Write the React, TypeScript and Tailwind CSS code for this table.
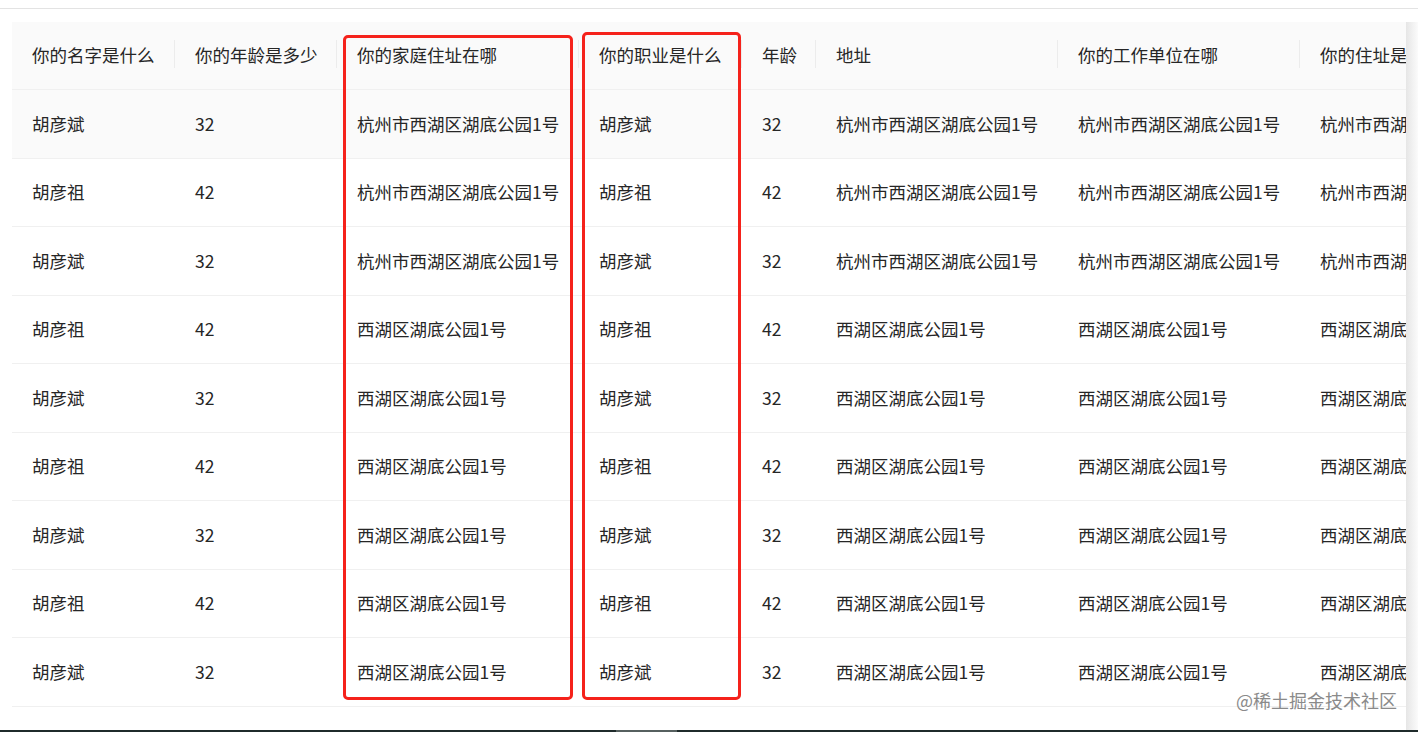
import React from "react";

const cols = "grid grid-cols-[163px_162px_242px_163px_74px_242px_242px_242px]";

const headers = [
  "你的名字是什么",
  "你的年龄是多少",
  "你的家庭住址在哪",
  "你的职业是什么",
  "年龄",
  "地址",
  "你的工作单位在哪",
  "你的住址是什么",
];

const long = "杭州市西湖区湖底公园1号";
const short = "西湖区湖底公园1号";

const rows = Array.from({ length: 9 }, (_, i) => {
  const name = i % 2 === 0 ? "胡彦斌" : "胡彦祖";
  const age = i % 2 === 0 ? "32" : "42";
  const addr = i < 3 ? long : short;
  return [name, age, addr, name, age, addr, addr, addr];
});

export default function App() {
  return (
    <div
      className="relative w-[1418px] h-[732px] bg-white overflow-hidden"
      style={{ fontFamily: '"Noto Sans CJK SC", "Noto Sans", sans-serif' }}
    >
      <div className="h-[8px]" />
      <div className="h-px bg-[#e3e3e3]" />
      <div className="h-[13px]" />
      <div className="ml-[12px] w-[1394px] overflow-hidden text-[17.5px] text-[#262626]">
        <div className="w-[1730px]">
          <div className={`${cols} h-[68px] bg-[#fafafa] border-b border-[#f0f0f0]`}>
            {headers.map((h, i) => (
              <div key={i} className="relative flex items-center pl-[20px] whitespace-nowrap">
                {h}
                {i < headers.length - 1 && (
                  <span className="absolute right-0 top-[18px] h-[28px] w-px bg-[#ececec]" />
                )}
              </div>
            ))}
          </div>
          {rows.map((r, ri) => (
            <div
              key={ri}
              className={`${cols} h-[68.5px] border-b border-[#f0f0f0] ${ri === 0 ? "bg-[#fafafa]" : "bg-white"}`}
            >
              {r.map((c, ci) => (
                <div key={ci} className="flex items-center pl-[20px] whitespace-nowrap">
                  {c}
                </div>
              ))}
            </div>
          ))}
        </div>
      </div>

      {/* right scroll shadow strip */}
      <div className="absolute right-0 top-[22px] bottom-[2px] w-[12px] bg-gradient-to-r from-[#e6e6e6] to-[#fbfbfb]" />

      {/* red annotation boxes */}
      <div className="absolute left-[343px] top-[35px] w-[230px] h-[665px] border-[3px] border-[#f5221b] rounded-[5px]" />
      <div className="absolute left-[582px] top-[32px] w-[159px] h-[668px] border-[3px] border-[#f5221b] rounded-[5px]" />

      {/* watermark */}
      <div className="absolute left-[1236px] top-[688px] text-[18px] leading-[24px] text-[#8a8a8a] whitespace-nowrap">
        @稀土掘金技术社区
      </div>

      {/* bottom bar */}
      <div className="absolute left-0 right-0 bottom-0 h-[2px] bg-[#1f2b2b]">
        <div className="absolute left-[616px] w-[61px] h-[2px] bg-[#56605f]" />
      </div>
    </div>
  );
}
